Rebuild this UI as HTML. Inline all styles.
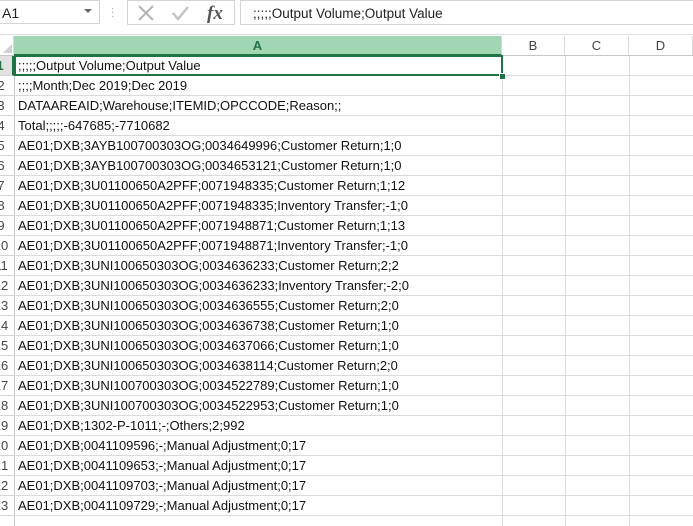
<!DOCTYPE html>
<html><head><style>
body{margin:0;width:693px;height:519px;overflow:hidden;background:#fff;font-family:"Liberation Sans",sans-serif;position:relative}
.abs{position:absolute}
.nb{left:0;top:0;width:100px;height:24px;border:1px solid #d4d4d4;border-left:none;background:#fff;font-size:14px;line-height:24px;padding-left:2px;box-sizing:border-box;color:#222}
.fb{left:240px;top:0;width:460px;height:25px;border:1px solid #d4d4d4;box-sizing:border-box;font-size:13.5px;line-height:25px;padding-left:12px;color:#222}
.hdr{top:36px;height:20px;font-size:13px;text-align:center;line-height:20px;color:#444;box-sizing:border-box;border-right:1px solid #d9d9d9;border-bottom:1px solid #c6c6c6}
.row{left:14px;width:700px;height:20px;border-bottom:1px solid #dadada;box-sizing:border-box;font-size:13px;line-height:20px;color:#111;padding-left:4px}
.rn{left:-12px;width:26px;height:20px;font-size:13px;text-align:center;line-height:20px;color:#444;border-bottom:1px solid #d4d4d4;box-sizing:border-box;background:#fff}
.vl{top:56px;width:1px;height:470px;background:#dadada}
</style></head><body>
<div class="abs nb">A1</div>
<div class="abs" style="left:84px;top:9px;width:0;height:0;border-left:4px solid transparent;border-right:4px solid transparent;border-top:4px solid #666"></div>
<div class="abs" style="left:111px;top:7px;color:#999;font-size:10px;line-height:4px">·<br>·<br>·</div>
<div class="abs" style="left:127px;top:0;width:108px;height:25px;border:1px solid #d4d4d4;box-sizing:border-box"></div>
<svg class="abs" style="left:135px;top:3px" width="100" height="20"><path d="M4 3 L18 17 M18 3 L4 17" stroke="#b3b3b3" stroke-width="2" fill="none"/><path d="M38 10 L43 16 L53 4" stroke="#c3c3c3" stroke-width="2.5" fill="none"/><text x="72" y="16" font-family="Liberation Serif" font-style="italic" font-weight="bold" font-size="19" fill="#555">fx</text></svg>
<div class="abs fb">;;;;;Output Volume;Output Value</div>
<div class="abs" style="left:0;top:34px;width:693px;height:1px;background:#e0e0e0"></div>
<div class="abs hdr" style="left:0;width:14px;background:#fff"></div>
<div class="abs" style="left:3px;top:44px;width:0;height:0;border-left:9px solid transparent;border-bottom:9px solid #d0d0d0"></div>
<div class="abs hdr" style="left:14px;width:488px;background:#a0d6b4;color:#217346;font-weight:bold;border-bottom:2px solid #217346">A</div>
<div class="abs hdr" style="left:502px;width:63px">B</div>
<div class="abs hdr" style="left:565px;width:64px">C</div>
<div class="abs hdr" style="left:629px;width:64px">D</div>
<div class="abs vl" style="left:14px;background:#c6c6c6"></div>
<div class="abs vl" style="left:502px"></div>
<div class="abs vl" style="left:565px"></div>
<div class="abs vl" style="left:629px"></div>
<div class="abs row" style="top:56px">;;;;;Output Volume;Output Value</div>
<div class="abs row" style="top:76px">;;;;Month;Dec 2019;Dec 2019</div>
<div class="abs row" style="top:96px">DATAAREAID;Warehouse;ITEMID;OPCCODE;Reason;;</div>
<div class="abs row" style="top:116px">Total;;;;;-647685;-7710682</div>
<div class="abs row" style="top:136px">AE01;DXB;3AYB100700303OG;0034649996;Customer Return;1;0</div>
<div class="abs row" style="top:156px">AE01;DXB;3AYB100700303OG;0034653121;Customer Return;1;0</div>
<div class="abs row" style="top:176px">AE01;DXB;3U01100650A2PFF;0071948335;Customer Return;1;12</div>
<div class="abs row" style="top:196px">AE01;DXB;3U01100650A2PFF;0071948335;Inventory Transfer;-1;0</div>
<div class="abs row" style="top:216px">AE01;DXB;3U01100650A2PFF;0071948871;Customer Return;1;13</div>
<div class="abs row" style="top:236px">AE01;DXB;3U01100650A2PFF;0071948871;Inventory Transfer;-1;0</div>
<div class="abs row" style="top:256px">AE01;DXB;3UNI100650303OG;0034636233;Customer Return;2;2</div>
<div class="abs row" style="top:276px">AE01;DXB;3UNI100650303OG;0034636233;Inventory Transfer;-2;0</div>
<div class="abs row" style="top:296px">AE01;DXB;3UNI100650303OG;0034636555;Customer Return;2;0</div>
<div class="abs row" style="top:316px">AE01;DXB;3UNI100650303OG;0034636738;Customer Return;1;0</div>
<div class="abs row" style="top:336px">AE01;DXB;3UNI100650303OG;0034637066;Customer Return;1;0</div>
<div class="abs row" style="top:356px">AE01;DXB;3UNI100650303OG;0034638114;Customer Return;2;0</div>
<div class="abs row" style="top:376px">AE01;DXB;3UNI100700303OG;0034522789;Customer Return;1;0</div>
<div class="abs row" style="top:396px">AE01;DXB;3UNI100700303OG;0034522953;Customer Return;1;0</div>
<div class="abs row" style="top:416px">AE01;DXB;1302-P-1011;-;Others;2;992</div>
<div class="abs row" style="top:436px">AE01;DXB;0041109596;-;Manual Adjustment;0;17</div>
<div class="abs row" style="top:456px">AE01;DXB;0041109653;-;Manual Adjustment;0;17</div>
<div class="abs row" style="top:476px">AE01;DXB;0041109703;-;Manual Adjustment;0;17</div>
<div class="abs row" style="top:496px">AE01;DXB;0041109729;-;Manual Adjustment;0;17</div>
<div class="abs rn" style="top:56px;color:#217346;font-weight:bold;background:#e1e1e1;border-right:2px solid #217346">1</div>
<div class="abs rn" style="top:76px">2</div><div class="abs rn" style="top:96px">3</div><div class="abs rn" style="top:116px">4</div><div class="abs rn" style="top:136px">5</div><div class="abs rn" style="top:156px">6</div><div class="abs rn" style="top:176px">7</div><div class="abs rn" style="top:196px">8</div><div class="abs rn" style="top:216px">9</div><div class="abs rn" style="top:236px">10</div><div class="abs rn" style="top:256px">11</div><div class="abs rn" style="top:276px">12</div><div class="abs rn" style="top:296px">13</div><div class="abs rn" style="top:316px">14</div><div class="abs rn" style="top:336px">15</div><div class="abs rn" style="top:356px">16</div><div class="abs rn" style="top:376px">17</div><div class="abs rn" style="top:396px">18</div><div class="abs rn" style="top:416px">19</div><div class="abs rn" style="top:436px">20</div><div class="abs rn" style="top:456px">21</div><div class="abs rn" style="top:476px">22</div><div class="abs rn" style="top:496px">23</div>
<div class="abs" style="left:14px;top:55px;width:489px;height:21px;border:2px solid #217346;box-sizing:border-box"></div>
<div class="abs" style="left:499px;top:73px;width:5px;height:5px;background:#217346;border:1px solid #fff"></div>
</body></html>
